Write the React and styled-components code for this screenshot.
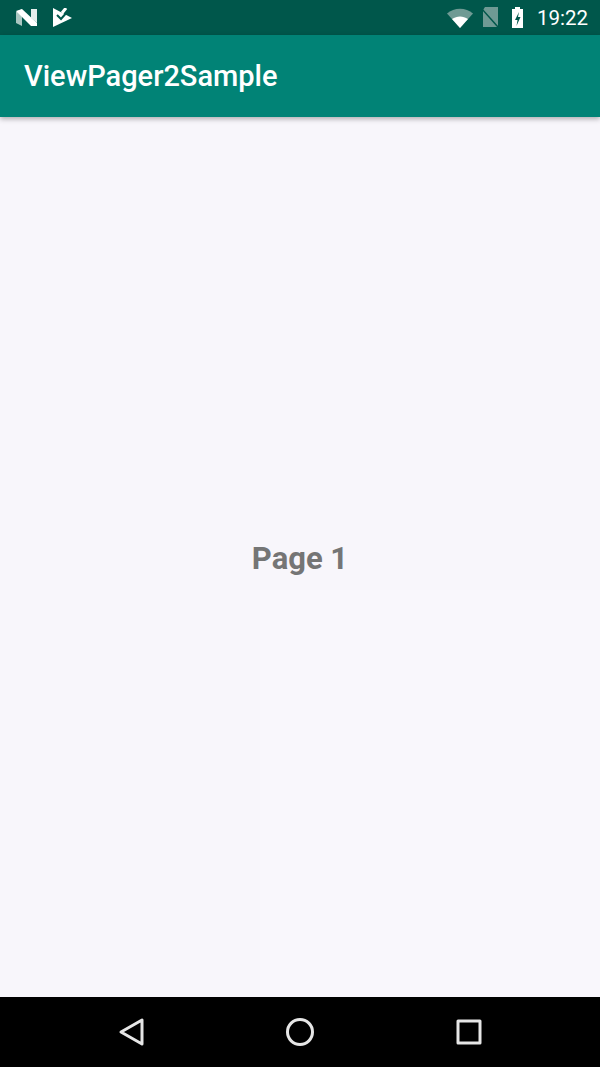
import React from 'react';
import styled, { createGlobalStyle } from 'styled-components';

const GlobalStyle = createGlobalStyle`
  html, body {
    margin: 0;
    padding: 0;
    background: #f8f6fb;
  }
`

const Screen = styled.div`
  width: 600px;
  height: 1067px;
  display: flex;
  flex-direction: column;
  overflow: hidden;
  font-family: Roboto, "Liberation Sans", sans-serif;
`

const StatusBar = styled.div`
  height: 35px;
  flex: none;
  background-color: #00574b;
  display: flex;
  align-items: center;
  justify-content: space-between;
  padding: 0 12px 0 16px;
`

const IconGroup = styled.div`
  display: flex;
  align-items: center;
  gap: ${props => props.gap}px;
`

const Clock = styled.span`
  color: #fff;
  font-size: 20.5px;
  margin-left: 6px;
`

const AppBar = styled.header`
  height: 82px;
  flex: none;
  background-color: #018376;
  box-shadow: 0 2px 5px rgba(0, 0, 0, .3);
  display: flex;
  align-items: center;
  padding: 0 0 0 24px;
  color: #fff;
  font-size: 29px;
  font-weight: 500;
  position: relative;
  z-index: 1;
`

const Page = styled.main`
  flex: 1;
  display: flex;
  align-items: center;
  justify-content: center;
  padding-top: 2px;
  background-color: #f8f6fb;
  background-image: linear-gradient(#f9f7fc, #f9f7fc);
  background-size: 340px 407px;
  background-position: right bottom;
  background-repeat: no-repeat;
  color: #757575;
  font-size: 31px;
  font-weight: 700;
`

const NavBar = styled.nav`
  height: 70px;
  flex: none;
  background-color: #000;
  display: flex;
  align-items: center;
  justify-content: center;
  gap: 129px;
`

const NavIcon = styled.svg`
  fill: none;
  stroke: #e6e6e6;
  stroke-width: 3;
  stroke-linejoin: round;
  display: block;
`

const NIcon = () => (
  <svg width="21" height="17" viewBox="0 0 21 17">
    <path d="M0 3 6 0V17L0 14Z" fill="#a9c6c1" />
    <path d="M0 2 6 0 21 14V17H15Z" fill="#fff" />
    <path d="M15 0H21V14L15 9Z" fill="#e4eeec" />
  </svg>
)

const PlayIcon = () => (
  <svg width="19" height="20" viewBox="0 0 19 20" style={{ display: 'block' }}>
    <path d="M0 0 19 10 0 19Z" fill="#fff" />
    <path d="M4 7 8 11 15 3" fill="none" stroke="#00574b" strokeWidth="2" />
    <path d="M9 5 13 0" fill="none" stroke="#fff" strokeWidth="3" />
  </svg>
)

const WifiIcon = () => (
  <svg width="26" height="20" viewBox="0 0 26 20">
    <path d="M0 5.5C7 -1 19 -1 26 5.5L13 20Z" fill="#6f9a94" />
    <path d="M5 11C10 7.5 16 7.5 21 11L13 20Z" fill="#fff" />
  </svg>
)

// wider than the drawing: the space to the right sets the gap to the battery
const SimIcon = () => (
  <svg width="23" height="21" viewBox="0 0 23 21">
    <path d="M4 0H17V20H2V3Z" fill="#6f9a94" />
    <path d="M0 1 17 20" stroke="#00574b" strokeWidth="1.5" />
  </svg>
)

const BatteryIcon = () => (
  <svg width="11" height="21" viewBox="0 0 11 21">
    <path d="M3 0H8V2H11V21H0V2H3Z" fill="#fff" />
    <path d="M7 5 3 13H5.5L4.5 19 8.5 10H6Z" fill="#00574b" />
  </svg>
)

const App = () => {
  return (
    <Screen>
      <GlobalStyle />
      <StatusBar>
        <IconGroup gap={16}>
          <NIcon />
          <PlayIcon />
        </IconGroup>
        <IconGroup gap={8}>
          <WifiIcon />
          <SimIcon />
          <BatteryIcon />
          <Clock>19:22</Clock>
        </IconGroup>
      </StatusBar>
      <AppBar>ViewPager2Sample</AppBar>
      <Page>Page 1</Page>
      <NavBar>
        <NavIcon width="40" height="40" viewBox="0 0 40 40">
          <path d="M31 8V32L10 20Z" />
        </NavIcon>
        <NavIcon width="40" height="40" viewBox="0 0 40 40">
          <circle cx="20" cy="20" r="12.5" />
        </NavIcon>
        <NavIcon width="40" height="40" viewBox="0 0 40 40">
          <rect x="9" y="9" width="22" height="22" />
        </NavIcon>
      </NavBar>
    </Screen>
  )
}

export default App;
